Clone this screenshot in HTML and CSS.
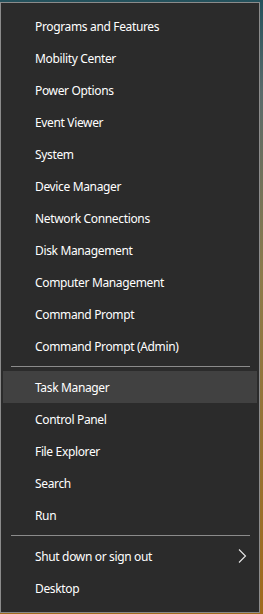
FILE: index.html
```html
<!DOCTYPE html>
<html lang="en">
<head>
  <meta charset="UTF-8" />
  <meta name="viewport" content="width=device-width, initial-scale=1.0" />
  <title>Quick Link Menu</title>
  <link rel="stylesheet" href="styles.css">
</head>
<body>
  <div class="menu">
    <ul class="group">
      <li class="item">Programs and Features</li>
      <li class="item">Mobility Center</li>
      <li class="item">Power Options</li>
      <li class="item">Event Viewer</li>
      <li class="item">System</li>
      <li class="item">Device Manager</li>
      <li class="item">Network Connections</li>
      <li class="item">Disk Management</li>
      <li class="item">Computer Management</li>
      <li class="item">Command Prompt</li>
      <li class="item">Command Prompt (Admin)</li>
    </ul>
    <div class="sep"></div>
    <ul class="group">
      <li class="item hover">Task Manager</li>
      <li class="item">Control Panel</li>
      <li class="item">File Explorer</li>
      <li class="item">Search</li>
      <li class="item">Run</li>
    </ul>
    <div class="sep"></div>
    <ul class="group">
      <li class="item">
        <span>Shut down or sign out</span>
        <svg class="chevron" width="9" height="14" viewBox="0 0 9 14"><path d="M1 0.5 L7.5 7 L1 13.5" fill="none" stroke="#e8e8e8" stroke-width="1.1"/></svg>
      </li>
      <li class="item">Desktop</li>
    </ul>
  </div>
</body>
</html>
```
FILE: styles.css
```css
:root {
  --bg: #2b2b2b;
  --hover: #414141;
  --line: #8b8b8b;
  --text: #ffffff;
}
* { box-sizing: border-box; margin: 0; padding: 0; }
body {
  width: 263px;
  height: 614px;
  overflow: hidden;
  background: linear-gradient(180deg, #23515c 0, #5a6a6a 15%, #8c7a4a 45%, #a06a1c 100%);
  font-family: 'Noto Sans', 'Open Sans', sans-serif;
}
.menu {
  margin-top: 2px;
  width: 260px;
  height: 611px;
  background: var(--bg);
  border: 1px solid var(--line);
  padding-top: 7px;
}
.group { list-style: none; }
.item {
  height: 32px;
  margin: 0 2px;
  padding: 0 10px 0 32px;
  display: flex;
  align-items: center;
  justify-content: space-between;
  color: var(--text);
  font-size: 12px;
  letter-spacing: -0.35px;
}
.item.hover { background: var(--hover); }
.chevron { display: block; }
/* Separator */
.sep {
  height: 1px;
  margin: 4px 9px 4px 10px;
  background: var(--line);
}
```
